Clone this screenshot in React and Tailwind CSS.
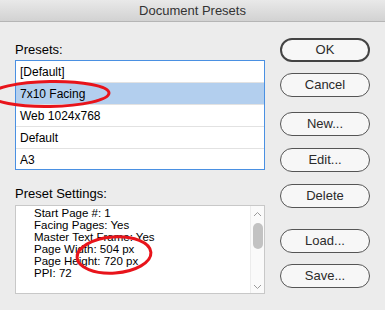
const presets = ['[Default]', '7x10 Facing', 'Web 1024x768', 'Default', 'A3'];

const settings = [
  'Start Page #: 1',
  'Facing Pages: Yes',
  'Master Text Frame: Yes',
  'Page Width: 504 px',
  'Page Height: 720 px',
  'PPI: 72',
];

function MacButton({ children, primary, className = '' }) {
  return (
    <button
      className={`w-[90px] h-[24px] rounded-full bg-[#f7f7f7] text-[13px] text-[#2b2b2b] flex items-center justify-center ${
        primary ? 'border-2 border-[#444]' : 'border border-[#555]'
      } ${className}`}
    >
      {children}
    </button>
  );
}

export default function App() {
  return (
    <div
      className="relative w-[385px] h-[310px] bg-[#ececec] overflow-hidden"
      style={{ fontFamily: '"Liberation Sans", Arial, sans-serif' }}
    >
      {/* Title bar */}
      <div className="h-[22px] bg-gradient-to-b from-[#e9e9e9] to-[#d2d2d2] border-b border-[#b5b5b5] flex items-center justify-center text-[13px] text-[#333]">
        Document Presets
      </div>

      <div className="flex pl-[15px] pr-[15px]">
        {/* Left column */}
        <div className="w-[250px]">
          <div className="mt-[19px] h-[18px] text-[13px] text-black leading-[18px]">Presets:</div>
          <div className="mt-[1px] h-[110px] border border-[#4a90e2] bg-white">
            {presets.map((p, i) => (
              <div
                key={p}
                className={`h-[22px] flex items-center pl-[4px] text-[12px] text-black ${
                  i === 1 ? 'bg-[#b3cfee]' : ''
                } ${i < presets.length - 1 ? 'border-b border-[#e2e2e2]' : ''}`}
              >
                {p}
              </div>
            ))}
          </div>

          <div className="mt-[15px] h-[18px] text-[13px] text-black leading-[18px]">Preset Settings:</div>
          <div className="mt-[2px] h-[89px] border border-[#c8c8c8] bg-white flex">
            <div className="flex-1 pl-[18px] pt-[1px] text-[11.5px] leading-[12px] text-black">
              {settings.map((s) => (
                <div key={s}>{s}</div>
              ))}
            </div>
            {/* Scrollbar */}
            <div className="w-[14px] bg-[#fafafa] border-l border-[#ececec] flex flex-col items-center">
              <svg width="9" height="6" viewBox="0 0 9 6" className="mt-[5px]">
                <path d="M1 5 L4.5 1.5 L8 5" fill="none" stroke="#9a9a9a" strokeWidth="1" />
              </svg>
              <div className="mt-[6px] w-[10px] h-[26px] rounded-full bg-[#c2c2c2]" />
              <svg width="9" height="6" viewBox="0 0 9 6" className="mt-auto mb-[3px]">
                <path d="M1 1 L4.5 4.5 L8 1" fill="none" stroke="#9a9a9a" strokeWidth="1" />
              </svg>
            </div>
          </div>
        </div>

        {/* Right column: buttons */}
        <div className="ml-auto flex flex-col mt-[16px]">
          <MacButton primary>OK</MacButton>
          <MacButton className="mt-[11px]">Cancel</MacButton>
          <MacButton className="mt-[15px]">New...</MacButton>
          <MacButton className="mt-[12px]">Edit...</MacButton>
          <MacButton className="mt-[12px]">Delete</MacButton>
          <MacButton className="mt-[21px]">Load...</MacButton>
          <MacButton className="mt-[11px]">Save...</MacButton>
        </div>
      </div>

      {/* Red annotation ellipses */}
      <svg className="absolute left-0 top-0 pointer-events-none" width="385" height="310">
        <ellipse cx="50" cy="94" rx="59" ry="12.5" fill="none" stroke="#e8141b" strokeWidth="3" transform="rotate(-1 50 94)" />
        <ellipse cx="114" cy="255" rx="37" ry="18" fill="none" stroke="#e8141b" strokeWidth="3" transform="rotate(-4 114 255)" />
      </svg>
    </div>
  );
}
